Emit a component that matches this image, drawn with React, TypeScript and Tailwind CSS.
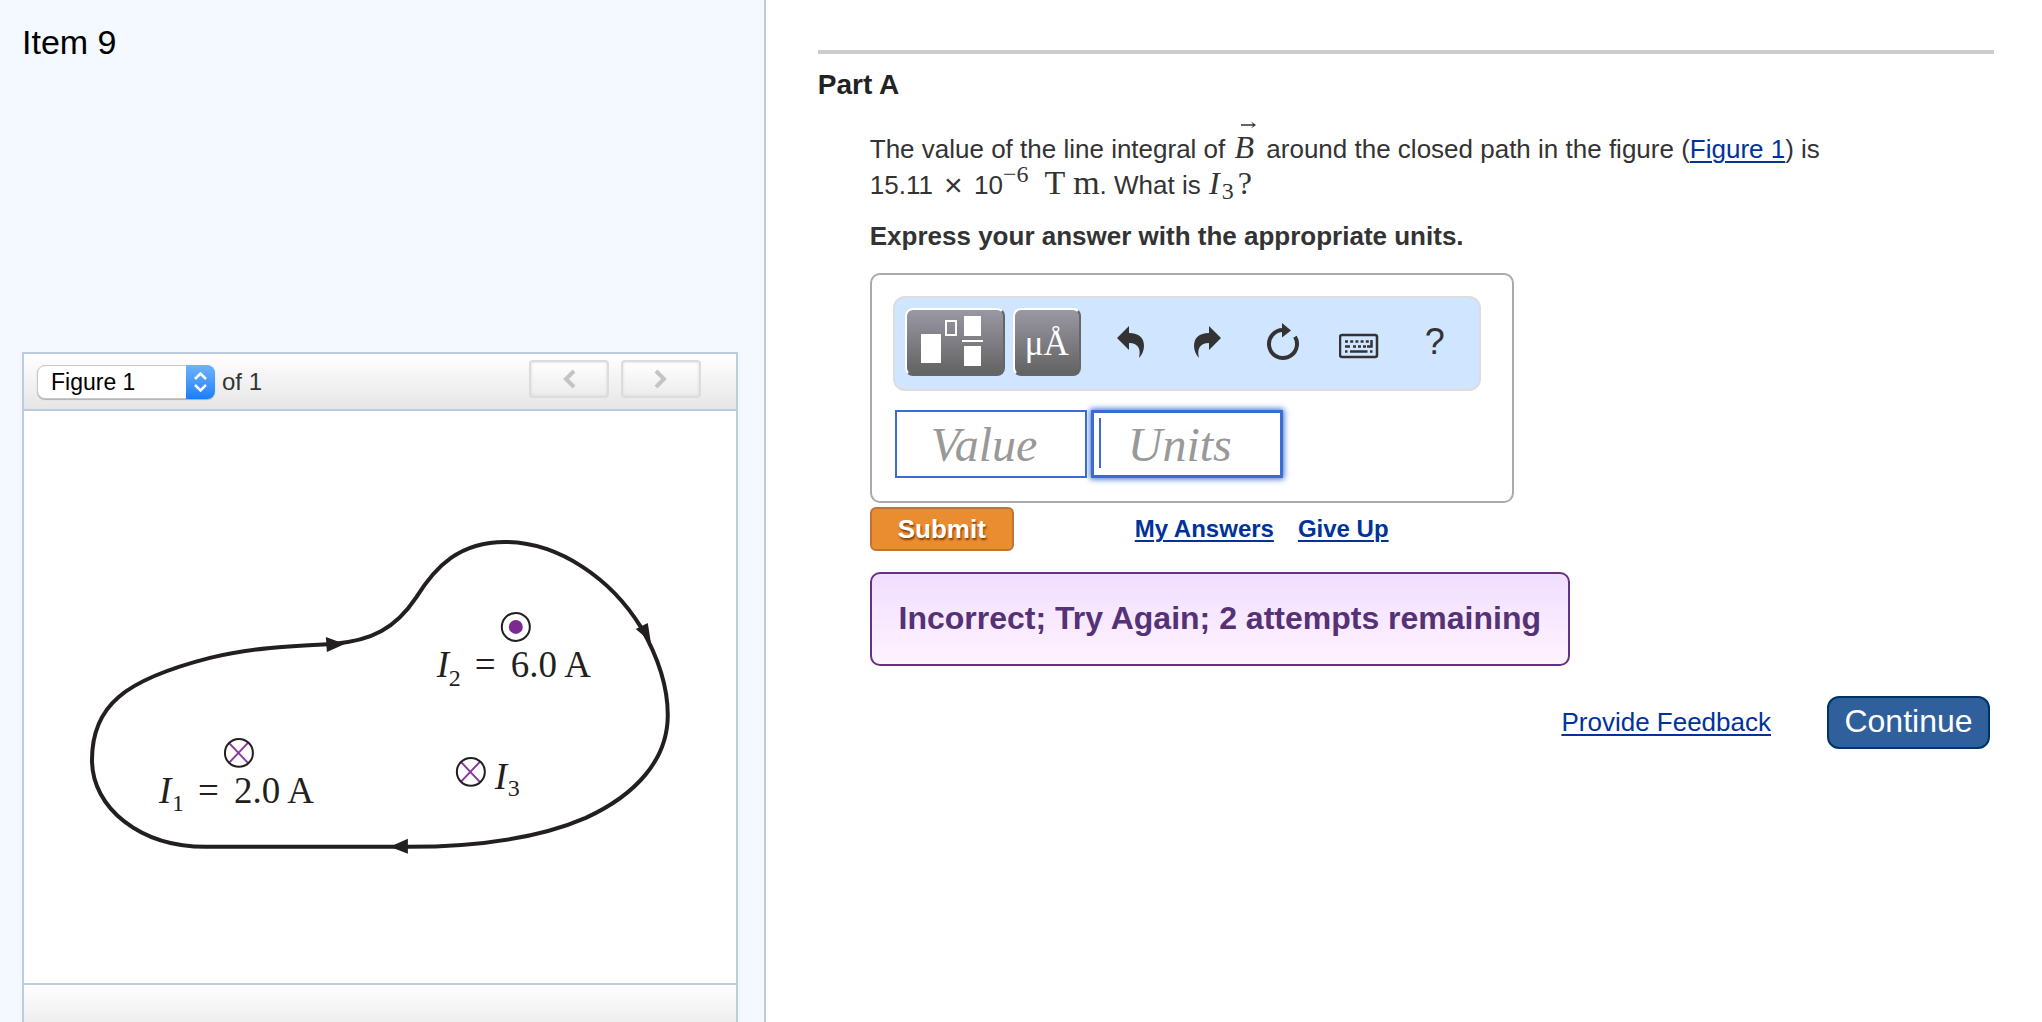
import { useState } from 'react';
import type { ReactNode } from 'react';

const linkClass = 'text-[#003399] underline decoration-2 underline-offset-3';

function PagerButton({ label, d }: { label: string; d: string }) {
  return (
    <button
      type="button"
      aria-label={label}
      className="flex h-[38px] w-20 items-center justify-center rounded-[4px] border-2 border-[#dcdcdc] bg-gradient-to-b from-white to-[#ececec] shadow-[inset_0_0_3px_#d8d8d8]"
    >
      <svg width="14" height="20" viewBox="0 0 14 20" fill="none" stroke="#c4c4c4" strokeWidth="4">
        <path d={d} />
      </svg>
    </button>
  );
}

function FigureDiagram() {
  return (
    <svg viewBox="24 411 712 572" className="block w-full" fontFamily="'Liberation Serif', serif" fontSize="37" fill="#231f20">
      <path
        d="M206 847 C140 847 92 808 92 760 C92 706 124 680 210 658 C250 648 290 646 333 644 C372 641 396 628 416 598 C436 566 460 542 505 542 C560 542 612 580 641 627 C656 653 668 684 668 715 C668 760 636 795 586 818 C535 840 470 847 408 847 Z"
        fill="none"
        stroke="#231f20"
        strokeWidth="4"
      />
      <path d="M326 637 L345 644 L327 652 Z" />
      <path d="M636 629 L648 623 L651 642 Z" />
      <path d="M408 839 L390 847 L408 854 Z" />

      <circle cx="516" cy="627" r="14" fill="none" stroke="#231f20" strokeWidth="2" />
      <circle cx="516" cy="627" r="7" fill="#7d2a90" />

      <g fill="none" strokeWidth="2">
        <path d="M229 743 L248 763 M248 743 L229 763" stroke="#8a3a9c" />
        <circle cx="239" cy="753" r="14" stroke="#231f20" />
        <path d="M461 762 L480 782 M480 762 L461 782" stroke="#8a3a9c" />
        <circle cx="471" cy="772" r="14" stroke="#231f20" />
      </g>

      <text x="159" y="803" fontStyle="italic">I</text>
      <text x="172" y="811" fontSize="24">1</text>
      <text x="198" y="803">=</text>
      <text x="234" y="803">2.0 A</text>
      <text x="437" y="677" fontStyle="italic">I</text>
      <text x="449" y="686" fontSize="24">2</text>
      <text x="475" y="677">=</text>
      <text x="511" y="677">6.0 A</text>
      <text x="495" y="789" fontStyle="italic">I</text>
      <text x="508" y="796" fontSize="24">3</text>
    </svg>
  );
}

function FigurePanel() {
  const [figure, setFigure] = useState('1');

  return (
    <div className="mr-[26px] ml-[22px] flex flex-1 flex-col border-x-2 border-t-2 border-[#bccbdd] bg-white">
      <div className="flex h-[57px] shrink-0 items-start justify-between border-b-2 border-[#bccbdd] bg-gradient-to-b from-white to-[#e6e6e6] pr-[35px] pl-[13px]">
        <div className="mt-[11px] flex items-center gap-[7px]">
          <div className="relative">
            <select
              aria-label="Figure"
              value={figure}
              onChange={(e) => setFigure(e.target.value)}
              className="block h-[34px] w-[178px] appearance-none rounded-lg border border-[#c8c8c8] bg-white pl-[13px] text-[23px] leading-8 text-black shadow-[0_1px_1px_#b0b0b0]"
            >
              <option value="1">Figure 1</option>
            </select>
            <span className="pointer-events-none absolute inset-y-0 right-0 flex w-[29px] items-center justify-center rounded-r-lg bg-gradient-to-b from-[#6db3fa] to-[#157efb]">
              <svg width="15" height="20" viewBox="0 0 15 20" fill="none" stroke="white" strokeWidth="2.5">
                <path d="M2 7 L7.5 1.5 L13 7 M2 13 L7.5 18.5 L13 13" />
              </svg>
            </span>
          </div>
          <span className="text-2xl leading-8 text-[#333]">of 1</span>
        </div>
        <div className="mt-[6px] flex gap-3">
          <PagerButton label="Previous figure" d="M12 2 L4 10 L12 18" />
          <PagerButton label="Next figure" d="M2 2 L10 10 L2 18" />
        </div>
      </div>
      <FigureDiagram />
      <div className="min-h-[37px] flex-1 border-t-2 border-[#bccbdd] bg-gradient-to-b from-white to-[#eee]" />
    </div>
  );
}

function KeyButton({ label, className, children }: { label: string; className: string; children: ReactNode }) {
  return (
    <button
      type="button"
      aria-label={label}
      className={`flex h-[68px] shrink-0 items-center justify-center rounded-lg border-2 border-t-white border-r-[#666] border-b-[#666] border-l-white bg-gradient-to-b from-[#9a98a3] to-[#636363] ${className}`}
    >
      {children}
    </button>
  );
}

function ToolButton({ label, children }: { label: string; children: ReactNode }) {
  return (
    <button type="button" aria-label={label} className="flex h-[68px] w-[76px] items-center justify-center text-[#333]">
      {children}
    </button>
  );
}

function MathToolbar() {
  return (
    <div className="flex h-[95px] items-start rounded-xl border-2 border-[#ddd] bg-[#d0e5ff] pt-[10px] pl-[10px]">
      <KeyButton label="Templates" className="mr-2 w-[100px]">
        <svg width="96" height="64" viewBox="907 310 96 64" fill="white">
          <rect x="921" y="334" width="20" height="29" />
          <rect x="946" y="321" width="10" height="14" fill="none" stroke="white" strokeWidth="2" />
          <rect x="964" y="316" width="17" height="20" />
          <rect x="962" y="340" width="21" height="2" />
          <rect x="964" y="346" width="17" height="20" />
        </svg>
      </KeyButton>
      <KeyButton label="Units" className="mr-3 w-[68px] pt-1 font-[Liberation_Serif,serif] text-[35px] text-white">
        μÅ
      </KeyButton>
      <ToolButton label="Undo">
        <svg width="28" height="32" viewBox="0 0 28 32" fill="currentColor">
          <path d="M0 12 L12 0 V7 C22 7 27 12 27 20 C27 24 25 29 22 32 C24 24 22 17 12 17 V24 Z" />
        </svg>
      </ToolButton>
      <ToolButton label="Redo">
        <svg width="28" height="32" viewBox="0 0 28 32" fill="currentColor">
          <path d="M28 12 L16 0 V7 C6 7 1 12 1 20 C1 24 3 29 6 32 C4 24 6 17 16 17 V24 Z" />
        </svg>
      </ToolButton>
      <ToolButton label="Reset">
        <svg width="34" height="38" viewBox="0 0 34 38">
          <path d="M29 13.8 A14 14 0 1 1 17 7" fill="none" stroke="currentColor" strokeWidth="4" />
          <path d="M16 0 L25 7.5 L16 14.5 Z" fill="currentColor" />
        </svg>
      </ToolButton>
      <ToolButton label="Keyboard">
        <svg width="40" height="26" viewBox="0 0 40 26" className="mt-2" fill="none" stroke="currentColor" strokeWidth="2.5">
          <rect x="1" y="2" width="37" height="22" rx="2" />
          <path d="M6 8.5 H30" strokeDasharray="3 2.2" />
          <path d="M6 13.5 H11 M14 13.5 H17 M19 13.5 H22 M24 13.5 H27" />
          <path d="M32.5 7 V13.5 H28" />
          <path d="M6 18.5 H8.5 M11 18.5 H28.5 M31 18.5 H33.5" />
        </svg>
      </ToolButton>
      <ToolButton label="Help">
        <span className="text-4xl">?</span>
      </ToolButton>
    </div>
  );
}

function AnswerBox() {
  const field =
    'h-[68px] w-48 bg-white pl-[34px] font-[Liberation_Serif,serif] text-5xl italic outline-none placeholder:text-[#999]';

  return (
    <div className="w-[644px] rounded-[10px] border-2 border-[#aaa] pt-[21px] pr-[31px] pb-[23px] pl-[21px]">
      <MathToolbar />
      <div className="mt-[19px] ml-[2px] flex gap-1">
        <input type="text" aria-label="Value" placeholder="Value" className={`${field} border-2 border-[#3a6cd2]`} />
        <div className="relative">
          <input
            type="text"
            aria-label="Units"
            placeholder="Units"
            className={`${field} border-[3px] border-[#3a6cd2] shadow-[0_0_6px_1px_#3a6cd2]`}
          />
          <span className="absolute top-2 left-2 h-[50px] w-[2px] bg-[#3a6cd2]" />
        </div>
      </div>
    </div>
  );
}

function VectorB() {
  return (
    <span className="relative mr-[5px] ml-[2px] font-[Liberation_Serif,serif] text-[32px] italic leading-0">
      B
      <svg width="16" height="8" viewBox="0 0 16 8" className="absolute -top-2 left-[6px]" fill="#333">
        <path d="M0 3.2 H12 L10 0.5 L15 4 L10 7.5 L12 4.8 H0 Z" />
      </svg>
    </span>
  );
}

function PartA() {
  return (
    <section className="border-t-4 border-[#ccc]">
      <h2 className="mt-[15px] text-[28px] leading-8 font-bold text-[#222]">Part A</h2>
      <div className="ml-[52px] text-[#333]">
        <p className="mt-[30px] text-[26px] leading-9">
          The value of the line integral of <VectorB /> around the closed path in the figure (
          <a href="#figure" className={linkClass}>Figure 1</a>) is
          <br />
          15.11 <span className="mx-1 align-[-2px] text-[32px] leading-0">×</span> 10
          <span className="align-[12px] text-2xl leading-0 font-[Liberation_Serif,serif]">−6</span>
          <span className="ml-4 text-[34px] leading-0 font-[Liberation_Serif,serif]">T m</span>. What is{' '}
          <span className="font-[Liberation_Serif,serif] text-[32px] leading-0">
            <i className="mr-[2px] ml-px">I</i>
            <span className="mr-1 align-[-5px] text-2xl leading-0">3</span>?
          </span>
        </p>
        <p className="mt-[15px] mb-[19px] text-[26px] leading-9 font-bold">Express your answer with the appropriate units.</p>

        <AnswerBox />

        <div className="mt-1 flex items-center">
          <button
            type="button"
            className="h-11 w-36 rounded-[6px] border-2 border-[#c07238] bg-[#ea8c30] text-[26px] leading-9 font-bold text-white [text-shadow:1px_2px_2px_#8a3c00]"
          >
            Submit
          </button>
          <a href="#answers" className={`${linkClass} ml-[121px] text-2xl font-bold`}>My Answers</a>
          <a href="#give-up" className={`${linkClass} ml-6 text-2xl font-bold`}>Give Up</a>
        </div>

        <div
          role="status"
          className="mt-[21px] w-[700px] rounded-[10px] border-2 border-[#663082] bg-gradient-to-b from-[#f1deff] to-[#fff3ff] pt-[22px] pb-6 text-center text-[32px] leading-[44px] font-bold whitespace-nowrap text-[#553176]"
        >
          Incorrect; Try Again; 2 attempts remaining
        </div>
      </div>
    </section>
  );
}

export default function App() {
  return (
    <div className="flex min-h-screen bg-white font-[Liberation_Sans,Arial,sans-serif]">
      <aside className="flex w-3/8 shrink-0 flex-col border-r-2 border-[#bccbdd] bg-[#f4f8ff]">
        <h1 className="mt-[22px] mb-[290px] ml-[22px] text-[34px] leading-10 text-black">Item 9</h1>
        <FigurePanel />
      </aside>
      <main className="min-w-0 flex-1 pt-[50px] pr-12 pl-[52px]">
        <PartA />
        <div className="mt-[30px] flex items-center justify-end">
          <a href="#feedback" className={`${linkClass} mr-14 text-[26px]`}>Provide Feedback</a>
          <button
            type="button"
            className="mr-1 h-[53px] w-[163px] rounded-xl border-2 border-[#003366] bg-[#30609b] pb-1 text-[32px] leading-10 text-white"
          >
            Continue
          </button>
        </div>
      </main>
    </div>
  );
}
